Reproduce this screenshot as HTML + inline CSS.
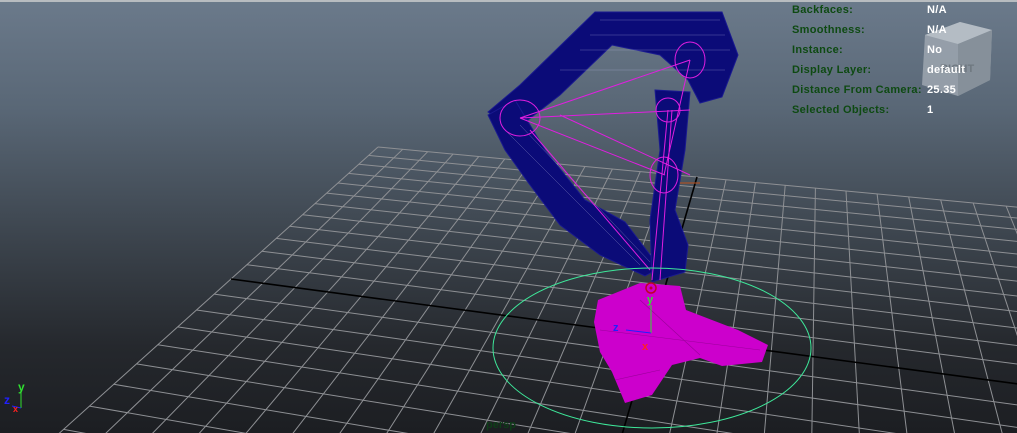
<!DOCTYPE html>
<html style="overflow:hidden;width:1017px;height:433px"><head><meta charset="utf-8"><style>
html,body{margin:0;padding:0;overflow:hidden}
body{width:1017px;height:433px;overflow:hidden;position:relative;background:linear-gradient(#6b7a8b 0%,#596776 25%,#3c444d 55%,#25282d 80%,#1c1e22 100%);font-family:"Liberation Sans",sans-serif}
#top{position:absolute;left:0;top:0;width:1017px;height:2px;background:#b8bcc0}
svg{position:absolute;left:0;top:0;display:block}
.hud{position:absolute;font-size:11px;font-weight:bold;line-height:20px;letter-spacing:0.3px}
.l{left:792px;color:#0e4a12}
.v{left:927px;color:#fff}
</style></head><body>
<div id="top"></div>
<svg id="g" width="1017" height="433" viewBox="0 0 1017 433"></svg>
<svg width="1017" height="433" viewBox="0 0 1017 433">
 <polygon points="925,35 960,22 992,30 990,80 958,96 922,85" fill="#9aa3ad" opacity="0.9"/>
 <polygon points="925,35 960,22 992,30 958,44" fill="#b4bcc4"/>
 <polygon points="958,44 992,30 990,80 958,96" fill="#86909a"/>
 <text x="940" y="72" font-size="11" font-weight="bold" fill="#6f7880" font-family="Liberation Sans">RIGHT</text>
 <g fill="#0b0b78" stroke="#1a1a90" stroke-width="1">
  <polygon points="488,112 520,85 595,12 722,12 738,55 722,97 700,103 688,80 660,55 612,45 560,95 515,130"/>
  <polygon points="488,115 515,100 545,150 585,200 625,222 660,268 645,276 600,255 560,225 530,185 505,150"/>
  <polygon points="655,90 690,92 685,150 675,210 688,245 685,272 652,282 650,220 660,150"/>
 </g>
 <g stroke="#b8b8e0" stroke-width="0.5" opacity="0.5">
  <line x1="600" y1="20" x2="720" y2="20"/><line x1="590" y1="35" x2="725" y2="35"/><line x1="580" y1="50" x2="730" y2="50"/><line x1="560" y1="70" x2="725" y2="70"/><line x1="505" y1="130" x2="640" y2="265"/><line x1="520" y1="125" x2="650" y2="262"/>
 </g>
 <g stroke="#e01ee0" fill="none" stroke-width="1">
  <ellipse cx="520" cy="118" rx="20" ry="18"/><ellipse cx="690" cy="60" rx="15" ry="18"/><ellipse cx="668" cy="110" rx="12" ry="12"/><ellipse cx="664" cy="175" rx="14" ry="18"/>
  <line x1="520" y1="118" x2="690" y2="60"/><line x1="520" y1="118" x2="665" y2="175"/><line x1="520" y1="118" x2="690" y2="110"/><line x1="530" y1="130" x2="650" y2="270"/><line x1="668" y1="110" x2="652" y2="280"/><line x1="672" y1="110" x2="660" y2="280"/><line x1="690" y1="60" x2="664" y2="175"/><line x1="560" y1="115" x2="690" y2="175"/>
 </g>
 <line x1="680" y1="183" x2="700" y2="183" stroke="#c0501a"/>
 <polygon points="598,300 640,283 680,286 686,310 738,330 768,345 762,362 722,366 700,358 672,365 652,395 625,403 612,372 600,352 594,322" fill="#cc00cc"/>
 <g stroke="#7a007a" stroke-width="0.6" opacity="0.6"><line x1="600" y1="330" x2="760" y2="350"/><line x1="615" y1="380" x2="660" y2="370"/><line x1="640" y1="300" x2="700" y2="355"/></g>
 <ellipse cx="652" cy="348" rx="159" ry="80" fill="none" stroke="#3ee89a" stroke-width="1"/>
 <circle cx="651" cy="288" r="5" fill="none" stroke="#c0002a" stroke-width="1.5"/><circle cx="651" cy="288" r="1.5" fill="#c0002a"/>
 <line x1="651" y1="305" x2="651" y2="333" stroke="#30e030"/>
 <line x1="626" y1="330" x2="651" y2="333" stroke="#2020ff"/>
 <text x="647" y="303" font-size="11" fill="#30e030" font-family="Liberation Sans" font-weight="bold">y</text>
 <text x="613" y="331" font-size="11" fill="#2020ff" font-family="Liberation Sans" font-weight="bold">z</text>
 <text x="642" y="350" font-size="11" fill="#ff2020" font-family="Liberation Sans" font-weight="bold">x</text>
 <line x1="21" y1="390" x2="21" y2="408" stroke="#30e030"/>
 <line x1="12" y1="406" x2="21" y2="408" stroke="#2020ff"/>
 <text x="18" y="391" font-size="12" font-weight="bold" fill="#30e030" font-family="Liberation Sans">y</text>
 <text x="4" y="404" font-size="12" font-weight="bold" fill="#2020ff" font-family="Liberation Sans">z</text>
 <text x="13" y="412" font-size="9" font-weight="bold" fill="#ff2020" font-family="Liberation Sans">x</text>
 <text x="486" y="428" font-size="11" font-weight="bold" fill="#0e3d18" font-family="Liberation Sans">persp</text>
</svg>
<div class="hud l" style="top:0">Backfaces:<br>Smoothness:<br>Instance:<br>Display Layer:<br>Distance From Camera:<br>Selected Objects:</div>
<div class="hud v" style="top:0">N/A<br>N/A<br>No<br>default<br>25.35<br>1</div>
<script>
(function(){
var src=[[0,0],[-12,0],[0,-12],[-12,-12]],dst=[[651,335],[231,279],[697,177],[378,147]];
var A=[],b=[];
for(var i=0;i<4;i++){var x=src[i][0],y=src[i][1],X=dst[i][0],Y=dst[i][1];
A.push([x,y,1,0,0,0,-x*X,-y*X]);b.push(X);A.push([0,0,0,x,y,1,-x*Y,-y*Y]);b.push(Y);}
var n=8;for(var c=0;c<n;c++){var p=c;for(var r=c+1;r<n;r++)if(Math.abs(A[r][c])>Math.abs(A[p][c]))p=r;
var t=A[c];A[c]=A[p];A[p]=t;t=b[c];b[c]=b[p];b[p]=t;
for(var r=0;r<n;r++){if(r==c)continue;var f=A[r][c]/A[c][c];for(var k=c;k<n;k++)A[r][k]-=f*A[c][k];b[r]-=f*b[c];}}
var h=[];for(var i=0;i<n;i++)h.push(b[i]/A[i][i]);
function P(x,y){var w=h[6]*x+h[7]*y+1;return[(h[0]*x+h[1]*y+h[2])/w,(h[3]*x+h[4]*y+h[5])/w];}
var s='';
function L(a,bb,col,sw){var p=P(a[0],a[1]),q=P(bb[0],bb[1]);s+='<line x1="'+p[0].toFixed(1)+'" y1="'+p[1].toFixed(1)+'" x2="'+q[0].toFixed(1)+'" y2="'+q[1].toFixed(1)+'" stroke="'+col+'" stroke-width="'+sw+'"/>';}
for(var i=-12;i<=12;i++){if(i==0)continue;L([i,-12],[i,12],'#8e9094',1);L([-12,i],[12,i],'#8e9094',1);}
L([0,-12],[0,12],'#000',1.6);L([-12,0],[12,0],'#000',1.6);
document.getElementById('g').innerHTML=s;
})();
</script>
</body></html>
